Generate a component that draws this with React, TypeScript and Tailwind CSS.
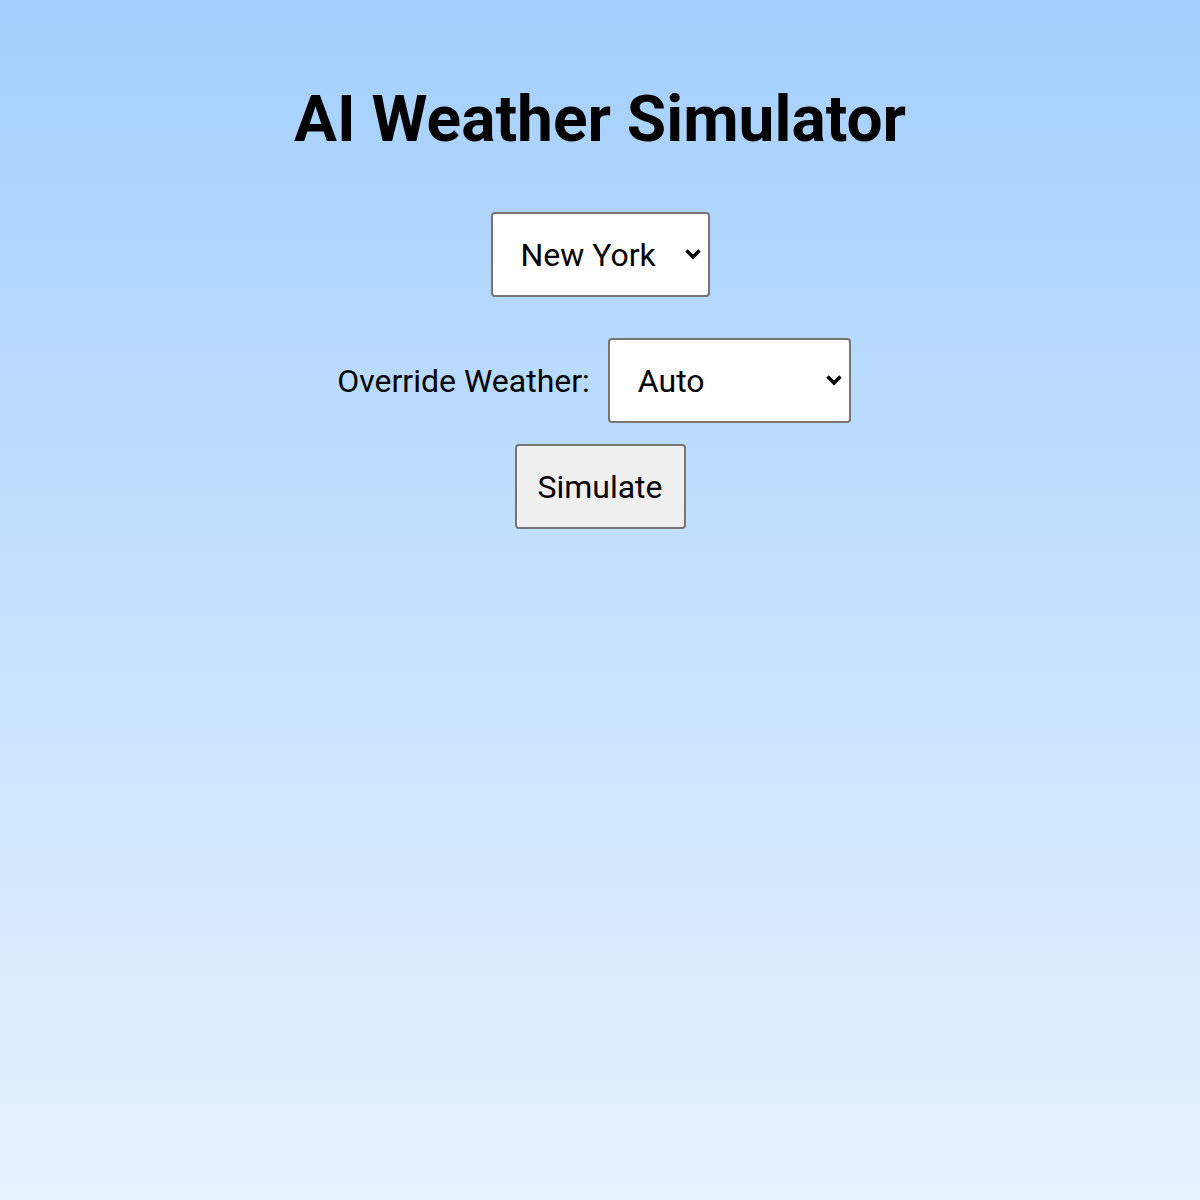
function Chevron() {
  return (
    <svg
      className="pointer-events-none absolute right-[8px] top-[36px]"
      width="18"
      height="12"
      viewBox="0 0 18 12"
    >
      <polyline points="2.5,2.5 9,9 15.5,2.5" fill="none" stroke="#000" strokeWidth="3.4" strokeLinecap="butt" strokeLinejoin="miter" />
    </svg>
  );
}

function Select({ width, value, options }: { width: string; value: string; options: string[] }) {
  return (
    <div className={`relative ${width}`}>
      <select
        defaultValue={value}
        className="appearance-none w-full h-[85px] pl-[28px] pr-[40px] text-[32px] bg-white border-2 border-[#767676] rounded-[4px] outline-none"
      >
        {options.map((o) => (
          <option key={o}>{o}</option>
        ))}
      </select>
      <Chevron />
    </div>
  );
}

export default function App() {
  return (
    <div
      className="min-h-[1200px] w-full bg-[linear-gradient(to_bottom,#a3cffe,#e7f3fe)] flex flex-col items-center text-black"
      style={{ fontFamily: "Roboto, 'Noto Sans', sans-serif" }}
    >
      <h1 className="mt-[78px] text-[64px] font-bold leading-[84px]">AI Weather Simulator</h1>
      <div className="mt-[50px]">
        <Select width="w-[219px]" value="New York" options={["New York", "London", "Tokyo"]} />
      </div>
      <div className="mt-[41px] mr-[12px] flex items-center gap-[18px]">
        <label className="text-[32px]">Override Weather:</label>
        <Select width="w-[243px]" value="Auto" options={["Auto", "Sunny", "Rainy", "Snowy"]} />
      </div>
      <button className="mt-[21px] w-[171px] h-[85px] text-[32px] bg-[#efefef] border-2 border-[#767676] rounded-[4px]">
        Simulate
      </button>
    </div>
  );
}
